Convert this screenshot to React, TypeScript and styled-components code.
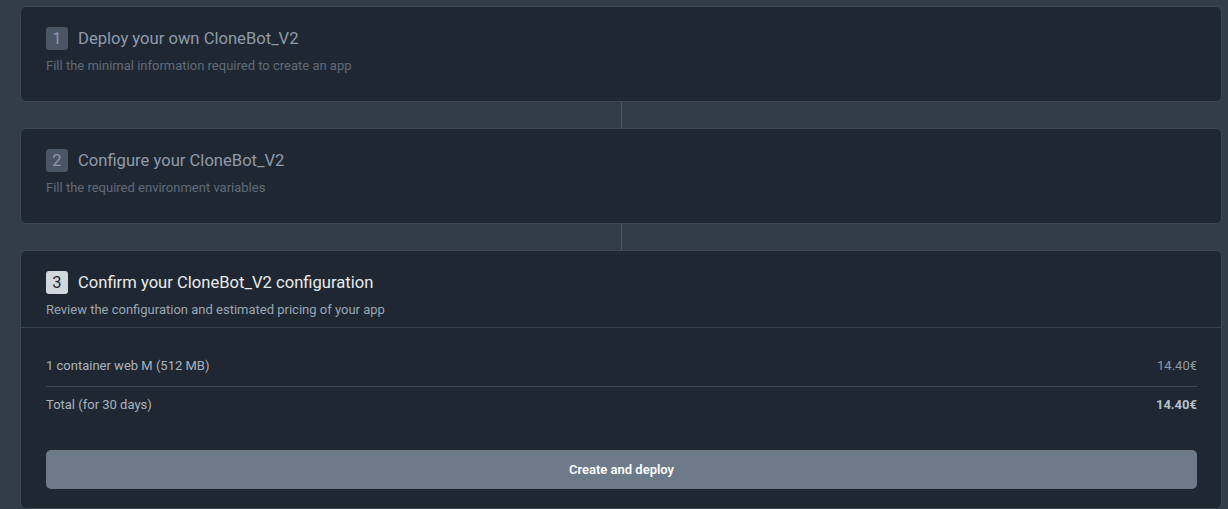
import React from 'react'
import styled, { createGlobalStyle, css } from 'styled-components'

const GlobalStyle = createGlobalStyle`
  html, body {
    margin: 0;
    padding: 0;
    background: #323d49;
    font-family: Roboto, "Liberation Sans", Arial, sans-serif;
  }
`

const PAGE = styled.div`
  padding: 6px 6px 0 20px;
  display: flex;
  flex-direction: column;
`

const CARD = styled.section<{ $collapsed?: boolean }>`
  background: #1f2832;
  border: 1px solid #3b4754;
  border-radius: 6px;
  ${({ $collapsed }) =>
    $collapsed &&
    css`
      padding-bottom: 18px;
    `}
`

const HEADER = styled.div<{ $divided?: boolean }>`
  padding: 20px 25px 9px;
  ${({ $divided }) =>
    $divided &&
    css`
      border-bottom: 1px solid #36414e;
    `}
`

const TITLE_ROW = styled.div`
  display: flex;
  align-items: center;
  gap: 10px;
`

const BADGE = styled.div<{ $active?: boolean }>`
  width: 22px;
  height: 23px;
  border-radius: 3px;
  display: flex;
  align-items: center;
  justify-content: center;
  font-size: 16.5px;
  background: ${({ $active }) => ($active ? '#d2d7dd' : '#4a5664')};
  color: ${({ $active }) => ($active ? '#1f2832' : '#8c98a6')};
`

const TITLE = styled.h2<{ $active?: boolean }>`
  margin: 0;
  font-size: 16.6px;
  font-weight: 400;
  color: ${({ $active }) => ($active ? '#e9ebee' : '#8f9bab')};
`

const SUBTITLE = styled.p<{ $active?: boolean }>`
  margin: 7px 0 0;
  font-size: 13px;
  line-height: 17px;
  color: ${({ $active }) => ($active ? '#9aa5b2' : '#5f6b79')};
`

const CONNECTOR = styled.div`
  height: 26px;
  display: flex;
  justify-content: center;
  &::before {
    content: '';
    width: 1px;
    background: #4a5665;
  }
`

const BODY = styled.div`
  padding: 19px 24px 19px 25px;
`

const LINE = styled.div<{ $total?: boolean }>`
  display: flex;
  justify-content: space-between;
  font-size: 13px;
  line-height: 17px;
  color: #a9b3bf;
  ${({ $total }) =>
    $total
      ? css`
          padding: 9px 0 0;
        `
      : css`
          padding: 10px 0 12px;
          border-bottom: 1px solid #3b4754;
        `}
`

const PRICE = styled.span<{ $bold?: boolean }>`
  color: ${({ $bold }) => ($bold ? '#b7c0cb' : '#8f9aa8')};
  font-weight: ${({ $bold }) => ($bold ? 700 : 400)};
`

const DEPLOY_BUTTON = styled.button`
  margin-top: 37px;
  width: 100%;
  height: 39px;
  border: none;
  border-radius: 5px;
  background: #6c7a8a;
  color: #ffffff;
  font-family: inherit;
  font-size: 13px;
  font-weight: 600;
  cursor: pointer;
`

const steps = [
  { n: 1, title: 'Deploy your own CloneBot_V2', sub: 'Fill the minimal information required to create an app' },
  { n: 2, title: 'Configure your CloneBot_V2', sub: 'Fill the required environment variables' },
]

const App = () => {
  return (
    <>
      <GlobalStyle />
      <PAGE>
        {steps.map((s) => (
          <React.Fragment key={s.n}>
            <CARD $collapsed>
              <HEADER>
                <TITLE_ROW>
                  <BADGE>{s.n}</BADGE>
                  <TITLE>{s.title}</TITLE>
                </TITLE_ROW>
                <SUBTITLE>{s.sub}</SUBTITLE>
              </HEADER>
            </CARD>
            <CONNECTOR />
          </React.Fragment>
        ))}
        <CARD>
          <HEADER $divided>
            <TITLE_ROW>
              <BADGE $active>3</BADGE>
              <TITLE $active>Confirm your CloneBot_V2 configuration</TITLE>
            </TITLE_ROW>
            <SUBTITLE $active>Review the configuration and estimated pricing of your app</SUBTITLE>
          </HEADER>
          <BODY>
            <LINE>
              <span>1 container web M (512 MB)</span>
              <PRICE>14.40€</PRICE>
            </LINE>
            <LINE $total>
              <span>Total (for 30 days)</span>
              <PRICE $bold>14.40€</PRICE>
            </LINE>
            <DEPLOY_BUTTON>Create and deploy</DEPLOY_BUTTON>
          </BODY>
        </CARD>
      </PAGE>
    </>
  )
}

export default App
